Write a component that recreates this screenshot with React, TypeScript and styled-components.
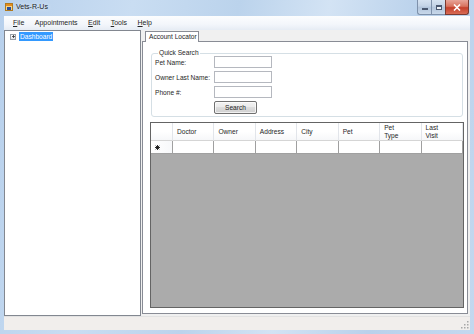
import React from "react";
import styled, { createGlobalStyle } from "styled-components";

const GlobalStyle = createGlobalStyle`
  html, body {
    margin: 0;
    padding: 0;
  }
  body {
    width: 474px;
    height: 334px;
    overflow: hidden;
    font-family: "Liberation Sans", Arial, sans-serif;
    font-size: 6.6px;
    color: #262626;
  }
  * {
    box-sizing: border-box;
  }
`

const columns = ["Doctor", "Owner", "Address", "City", "Pet", "Pet\nType", "Last\nVisit"]
const menus = [
    {key: "F", rest: "ile", underline: true},
    {key: "A", rest: "ppointments", underline: false},
    {key: "E", rest: "dit", underline: true},
    {key: "T", rest: "ools", underline: true},
    {key: "H", rest: "elp", underline: true},
]
const fields = ["Pet Name:", "Owner Last Name:", "Phone #:"]

const AppIcon = () => (
    <svg width="8" height="8" viewBox="0 0 8 8">
        <rect x="0.5" y="0.5" width="7" height="7" fill="#F6D78A" stroke="#B07A20" />
        <rect x="1" y="1" width="6" height="2" fill="#E58C1E" />
        <rect x="2" y="4" width="4" height="3" fill="#2C4F9A" />
    </svg>
)

const NewRowGlyph = () => (
    <svg width="5" height="5" viewBox="0 0 5 5">
        <path d="M2.5 0v5M0 2.5h5M0.7 0.7l3.6 3.6M4.3 0.7L0.7 4.3" stroke="#111" strokeWidth="0.9" />
    </svg>
)

export default function App() {
    return (
        <>
            <GlobalStyle />
            <Window>
                <TitleBar>
                    <AppIcon />
                    <Title>Vets-R-Us</Title>
                    <Controls>
                        <CaptionButton>
                            <MinGlyph />
                        </CaptionButton>
                        <CaptionButton>
                            <MaxGlyph />
                        </CaptionButton>
                        <CloseButton>
                            <svg width="8" height="7" viewBox="0 0 8 7">
                                <path d="M1 0.5l6 6M7 0.5l-6 6" stroke="#fff" strokeWidth="1.6" />
                            </svg>
                        </CloseButton>
                    </Controls>
                </TitleBar>
                <Client>
                    <MenuBar>
                        {menus.map(m => (
                            <MenuItem key={m.key}>
                                {m.underline ? <u>{m.key}</u> : m.key}
                                {m.rest}
                            </MenuItem>
                        ))}
                    </MenuBar>
                    <Body>
                        <TreePane>
                            <TreeItem>
                                <Expander>
                                    <svg width="3" height="3" viewBox="0 0 3 3">
                                        <path d="M0 1.5h3M1.5 0v3" stroke="#333" strokeWidth="0.8" />
                                    </svg>
                                </Expander>
                                <TreeLabel selected>Dashboard</TreeLabel>
                            </TreeItem>
                        </TreePane>
                        <TabArea>
                            <TabStrip>
                                <Tab>Account Locator</Tab>
                            </TabStrip>
                            <TabPage>
                                <GroupBox>
                                    <Legend>Quick Search</Legend>
                                    <SearchForm>
                                        {fields.map(f => (
                                            <React.Fragment key={f}>
                                                <FieldLabel>{f}</FieldLabel>
                                                <TextBox />
                                            </React.Fragment>
                                        ))}
                                        <SearchButton>Search</SearchButton>
                                    </SearchForm>
                                </GroupBox>
                                <DataGrid>
                                    <GridRow>
                                        <HeaderCell />
                                        {columns.map(c => (
                                            <HeaderCell key={c}>{c}</HeaderCell>
                                        ))}
                                    </GridRow>
                                    <GridRow>
                                        <RowHeader>
                                            <NewRowGlyph />
                                        </RowHeader>
                                        {columns.map(c => (
                                            <DataCell key={c} />
                                        ))}
                                    </GridRow>
                                </DataGrid>
                            </TabPage>
                        </TabArea>
                    </Body>
                    <StatusBar>
                        <Grip>
                            <svg width="9" height="9" viewBox="0 0 9 9">
                                {[[7, 1], [7, 4], [4, 4], [7, 7], [4, 7], [1, 7]].map(([x, y]) => (
                                    <rect key={`${x}-${y}`} x={x} y={y} width="1.5" height="1.5" fill="#A8A8A8" />
                                ))}
                            </svg>
                        </Grip>
                    </StatusBar>
                </Client>
            </Window>
        </>
    )
}

const Window = styled.div`
  width: 474px;
  height: 334px;
  display: flex;
  flex-direction: column;
  background: linear-gradient(100deg, #B7D0EC 0%, #C9DDF2 25%, #BBD3EC 45%, #D3E3F4 62%, #B9D1EB 80%, #C3D8EF 100%);
`

const TitleBar = styled.div`
  height: 16px;
  display: flex;
  align-items: flex-start;
  padding-left: 5px;
  padding-top: 3px;
  position: relative;
`

const Title = styled.span`
  margin-left: 3px;
  line-height: 8px;
  font-size: 7px;
  color: #1B1B1B;
  text-shadow: 0 0 4px rgba(255, 255, 255, 0.9);
`

const Controls = styled.div`
  margin-left: auto;
  margin-right: 5px;
  margin-top: -3px;
  display: flex;
  height: 15px;
`

const CaptionButton = styled.div`
  width: 14px;
  height: 15px;
  display: flex;
  align-items: center;
  justify-content: center;
  background: linear-gradient(#D6E3F1 0%, #C3D3E6 45%, #B1C4DB 50%, #C8D8EA 100%);
  border: 1px solid #7E91AB;
  border-top: none;
  border-right: none;
  &:first-child {
    border-bottom-left-radius: 3px;
  }
`

const MinGlyph = styled.div`
  width: 6px;
  height: 2px;
  margin-top: 4px;
  background: #fff;
  border: 0.5px solid #4A5870;
`

const MaxGlyph = styled.div`
  width: 6px;
  height: 5px;
  border: 1px solid #4A5870;
  border-top-width: 2px;
  background: #EFF4FA;
`

const CloseButton = styled.div`
  width: 24px;
  height: 15px;
  display: flex;
  align-items: center;
  justify-content: center;
  background: linear-gradient(#E8A599 0%, #D8735F 45%, #C5402B 55%, #D86B55 100%);
  border: 1px solid #7A3A30;
  border-top: none;
  border-bottom-right-radius: 3px;
`

const Client = styled.div`
  flex: 1;
  margin: 0 4px 4px 4px;
  display: flex;
  flex-direction: column;
  background: #F0F0F0;
  min-height: 0;
`

const MenuBar = styled.div`
  height: 14px;
  display: flex;
  align-items: center;
  padding-left: 4px;
  font-size: 7px;
  background: linear-gradient(#FCFDFE 0%, #F3F6FB 60%, #E6ECF4 100%);
`

const MenuItem = styled.span`
  padding: 0 5px;
  margin-right: 0.5px;
  line-height: 10px;
  u {
    text-decoration-thickness: 0.5px;
    text-underline-offset: 1px;
  }
`

const Body = styled.div`
  flex: 1;
  display: flex;
  min-height: 0;
`

const TreePane = styled.div`
  width: 137px;
  background: #fff;
  border: 1px solid #828790;
  padding: 1px 0 0 5px;
`

const TreeItem = styled.div`
  display: flex;
  align-items: center;
  height: 9px;
`

const Expander = styled.div`
  width: 6px;
  height: 6px;
  border: 1px solid #98A0A8;
  background: linear-gradient(#FFFFFF, #E2E4E8);
  display: flex;
  align-items: center;
  justify-content: center;
  margin-right: 3px;
`

const TreeLabel = styled.span<{ selected?: boolean }>`
  padding: 0 1px;
  line-height: 9px;
  background: ${props => props.selected ? '#3399FF' : 'transparent'};
  color: ${props => props.selected ? '#FFFFFF' : '#000000'};
`

const TabArea = styled.div`
  flex: 1;
  margin: 0 2px 0 1px;
  padding-bottom: 2px;
  display: flex;
  flex-direction: column;
`

const TabStrip = styled.div`
  height: 11px;
  display: flex;
  align-items: flex-end;
  padding-left: 3px;
`

const Tab = styled.div`
  position: relative;
  z-index: 1;
  height: 11px;
  width: 54px;
  margin-bottom: -1px;
  padding: 1px 0 0 3px;
  line-height: 8px;
  background: #fff;
  border: 1px solid #898C95;
  border-bottom: none;
  white-space: nowrap;
`

const TabPage = styled.div`
  flex: 1;
  display: flex;
  flex-direction: column;
  background: #fff;
  border: 1px solid #898C95;
  padding: 7px 3px 5px 7px;
`

const GroupBox = styled.fieldset`
  margin: 0 1px 0 1px;
  padding: 0 3px 3px 3px;
  border: 1px solid #D5DFE5;
  border-radius: 3px;
  min-width: 0;
`

const Legend = styled.legend`
  padding: 0 1px;
  margin-left: 3px;
  line-height: 8px;
  font-size: 6.6px;
`

const SearchForm = styled.div`
  display: grid;
  grid-template-columns: 59px 58px;
  grid-auto-rows: 12px;
  row-gap: 3px;
  align-items: center;
  margin-top: -1px;
`

const FieldLabel = styled.span`
  line-height: 8px;
  padding-top: 2px;
  white-space: nowrap;
`

const TextBox = styled.div`
  height: 12px;
  border: 1px solid #B5B8BF;
  background: #fff;
`

const SearchButton = styled.div`
  grid-column: 2;
  width: 43px;
  height: 13px;
  display: flex;
  align-items: center;
  justify-content: center;
  border: 1px solid #707070;
  border-radius: 2px;
  background: linear-gradient(#F2F2F2 0%, #EBEBEB 45%, #DDDDDD 50%, #CFCFCF 100%);
  box-shadow: inset 0 0 0 1px rgba(255, 255, 255, 0.7);
`

const DataGrid = styled.div`
  flex: 1;
  margin-top: 5px;
  border: 1px solid #646464;
  background: #ABABAB;
  display: flex;
  flex-direction: column;
`

const GridRow = styled.div`
  display: grid;
  grid-template-columns: 22px repeat(7, 1fr);
`

const HeaderCell = styled.div`
  height: 18px;
  display: flex;
  align-items: center;
  padding-left: 4px;
  white-space: pre-line;
  line-height: 8px;
  background: linear-gradient(#FFFFFF 0%, #FFFFFF 50%, #F6F7F9 100%);
  border-right: 1px solid #E2E5EA;
  border-bottom: 1px solid #D5D5D5;
`

const RowHeader = styled.div`
  height: 13px;
  display: flex;
  align-items: center;
  padding-left: 4px;
  background: linear-gradient(90deg, #FFFFFF, #F7F8FA);
  border-right: 1px solid #A0A0A0;
  border-bottom: 1px solid #A0A0A0;
`

const DataCell = styled.div`
  height: 13px;
  background: #fff;
  border-right: 1px solid #A0A0A0;
  border-bottom: 1px solid #A0A0A0;
`

const StatusBar = styled.div`
  height: 14px;
  display: flex;
  justify-content: flex-end;
  align-items: flex-end;
  background: #F1EEEC;
  border-top: 1px solid #E2E2E2;
`

const Grip = styled.div`
  width: 10px;
  height: 10px;
  display: flex;
`
